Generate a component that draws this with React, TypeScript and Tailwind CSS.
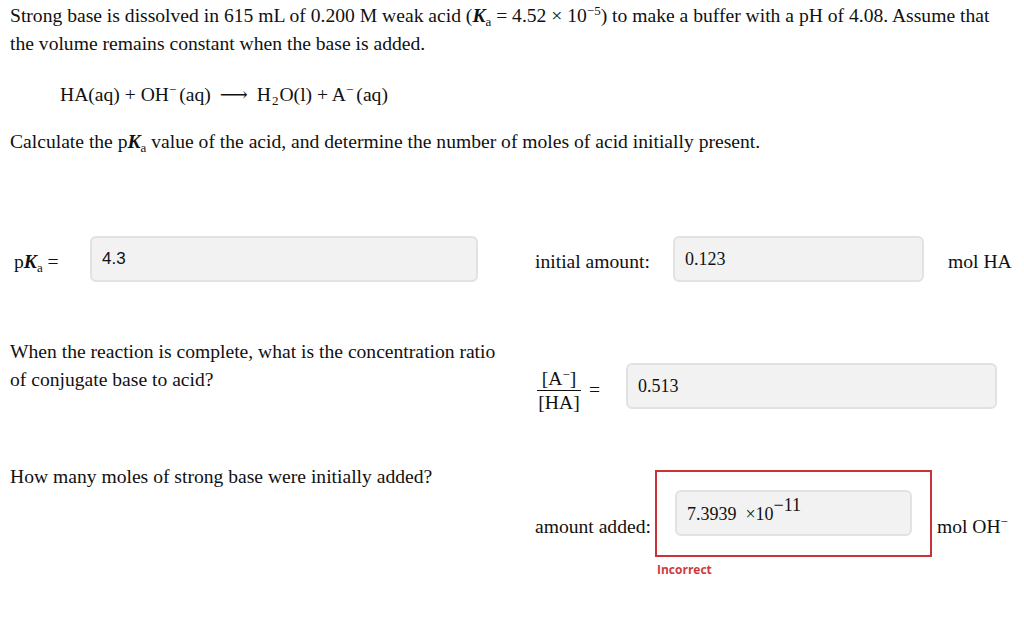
import React from 'react'

const serif = { fontFamily: '"Liberation Serif", "DejaVu Serif", serif' }

function Field({ value, className = '', sans = false }: { value: React.ReactNode; className?: string; sans?: boolean }) {
  return (
    <div
      className={`flex h-[46px] items-center rounded-[6px] border-2 border-[#e2e2e2] bg-[#f2f2f2] px-[10px] text-[18px] text-[#111] ${className}`}
      style={sans ? { fontFamily: '"Liberation Sans", Arial, sans-serif', fontSize: '17px' } : serif}
    >
      {value}
    </div>
  )
}

const Sup = ({ children, className = 'align-[7px]' }: { children: React.ReactNode; className?: string }) => (
  <span className={`text-[13px] leading-[0] ${className}`}>{children}</span>
)

const Sub = ({ children, className = '' }: { children: React.ReactNode; className?: string }) => (
  <span className={`text-[13px] leading-[0] align-[-4px] ${className}`}>{children}</span>
)

const Ka = () => (
  <>
    <span className="font-bold italic">K</span>
    <Sub>a</Sub>
  </>
)

export default function App() {
  return (
    <div className="min-h-[642px] w-[1024px] bg-white text-[19.6px] leading-[28px] text-[#111]" style={serif}>
      <div className="pl-[10px] pt-[2px] pr-[10px]">
        <p>
          Strong base is dissolved in 615 mL of 0.200 M weak acid (<Ka /> = 4.52 × 10<Sup>−5</Sup>) to make a buffer
          with a pH of 4.08. Assume that the volume remains constant when the base is added.
        </p>

        <p className="mt-[23px] pl-[50px]">
          HA(aq) + OH<Sup className="align-[7px] mr-[3px]">−</Sup>(aq) <span className="mx-[4px]">⟶</span> H
          <Sub className="mx-[1px]">2</Sub>O(l) + A<Sup className="align-[7px] mr-[3px]">−</Sup>(aq)
        </p>

        <p className="mt-[19px]">
          Calculate the p<Ka /> value of the acid, and determine the number of moles of acid initially present.
        </p>
      </div>

      {/* row 1 */}
      <div className="mt-[80px] flex h-[46px] items-center">
        <div className="ml-[14px] w-[76px] pt-[6px]">
          p<Ka /> =
        </div>
        <Field value="4.3" sans className="w-[388px]" />
        <div className="ml-[57px] w-[138px] pt-[6px]">initial amount:</div>
        <Field value="0.123" className="w-[251px]" />
        <div className="ml-[24px] pt-[6px]">mol HA</div>
      </div>

      {/* row 2 */}
      <div className="mt-[56px] flex items-start">
        <p className="ml-[10px] w-[525px]">
          <span className="block w-[500px]">
            When the reaction is complete, what is the concentration ratio of conjugate base to acid?
          </span>
        </p>
        <div className="mt-[25px] flex h-[46px] items-center">
          <div className="ml-[2px] mt-[8px] flex flex-col items-center leading-[23px]">
            <span className="px-[2px]">
              [A<Sup className="align-[6px]">−</Sup>]
            </span>
            <span className="h-px w-[44px] bg-[#111]" />
            <span>[HA]</span>
          </div>
          <span className="ml-[8px] mt-[8px]">=</span>
          <Field value="0.513" className="ml-[26px] w-[371px]" />
        </div>
      </div>

      {/* row 3 */}
      <div className="mt-[54px] flex items-start">
        <p className="ml-[10px] w-[525px]">How many moles of strong base were initially added?</p>
        <div className="mt-[7px]">
          <div className="flex items-center">
            <span className="pt-[26px]">amount added:</span>
            <div className="ml-[4px] border-2 border-[#c8333a] p-[18px] pb-[19px]">
              <Field
                className="w-[237px]"
                value={
                  <span className="pt-[2px]">
                    7.3939&nbsp; ×10
                    <span className="text-[18px] leading-[0] align-[9px]">−11</span>
                  </span>
                }
              />
            </div>
            <span className="ml-[5px] pt-[26px]">
              mol OH<Sup>−</Sup>
            </span>
          </div>
          <div
            className="ml-[122px] mt-[5px] text-[12px] font-bold leading-[16px] text-[#d03a3a]"
            style={{ fontFamily: '"Open Sans", "Liberation Sans", sans-serif' }}
          >
            Incorrect
          </div>
        </div>
      </div>
    </div>
  )
}
